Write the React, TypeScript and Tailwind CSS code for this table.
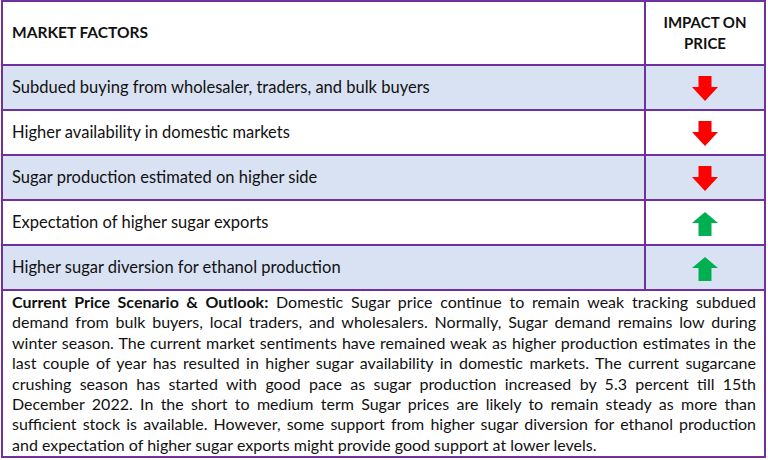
const rows = [
  { text: "Subdued buying from wholesaler, traders, and bulk buyers", up: false, shaded: true },
  { text: "Higher availability in domestic markets", up: false, shaded: false },
  { text: "Sugar production estimated on higher side", up: false, shaded: true },
  { text: "Expectation of higher sugar exports", up: true, shaded: false },
  { text: "Higher sugar diversion for ethanol production", up: true, shaded: true },
];

const lines = [
  "demand from bulk buyers, local traders, and wholesalers. Normally, Sugar demand remains low during",
  "winter season. The current market sentiments have remained weak as higher production estimates in the",
  "last couple of year has resulted in higher sugar availability in domestic markets. The current sugarcane",
  "crushing season has started with good pace as sugar production increased by 5.3 percent till 15th",
  "December 2022. In the short to medium term Sugar prices are likely to remain steady as more than",
  "sufficient stock is available. However, some support from higher sugar diversion for ethanol production",
];

const Arrow = ({ up }: { up: boolean }) =>
  up ? (
    <svg width="26" height="24" viewBox="0 0 26 24">
      <path d="M13 0 L26 11 H19.5 V24 H6.5 V11 H0 Z" fill="#00b050" />
    </svg>
  ) : (
    <svg width="26" height="25" viewBox="0 0 26 25">
      <path d="M6.5 0 H19.5 V11 H26 L13 25 L0 11 H6.5 Z" fill="#ff0000" />
    </svg>
  );

const App = () => {
  return (
    <div className="w-[768px] h-[460px] bg-white font-['Lato',sans-serif] text-[#111]">
      <div className="ml-[1px] w-[765px] border-2 border-[#7030a0]">
        {/* header */}
        <div className="flex h-[64px] border-b-2 border-[#7030a0]">
          <div className="flex-1 flex items-center pl-[9px] text-[15.5px] font-bold">MARKET FACTORS</div>
          <div className="w-[120px] border-l-2 border-[#7030a0] flex items-center justify-center text-center text-[15px] font-bold leading-[21px]">
            IMPACT ON
            <br />
            PRICE
          </div>
        </div>

        {rows.map((r) => (
          <div
            key={r.text}
            className={`flex h-[45px] border-b-2 border-[#7030a0] ${r.shaded ? "bg-[#d9e2f3]" : "bg-white"}`}
          >
            <div className="flex-1 flex items-center pl-[9px] text-[16.5px]">{r.text}</div>
            <div className="w-[120px] border-l-2 border-[#7030a0] flex items-center justify-center pt-[2px]">
              <Arrow up={r.up} />
            </div>
          </div>
        ))}

        {/* outlook */}
        <div className="pl-[9px] pr-[8px] pt-[1px] pb-[1px] text-[16px] leading-[20.4px]">
          <div className="whitespace-nowrap text-justify [text-align-last:justify]">
            <span className="font-bold">Current Price Scenario &amp; Outlook:</span> Domestic Sugar price continue to
            remain weak tracking subdued
          </div>
          {lines.map((l) => (
            <div key={l} className="whitespace-nowrap text-justify [text-align-last:justify]">
              {l}
            </div>
          ))}
          <div>and expectation of higher sugar exports might provide good support at lower levels.</div>
        </div>
      </div>
    </div>
  );
};

export default App;
